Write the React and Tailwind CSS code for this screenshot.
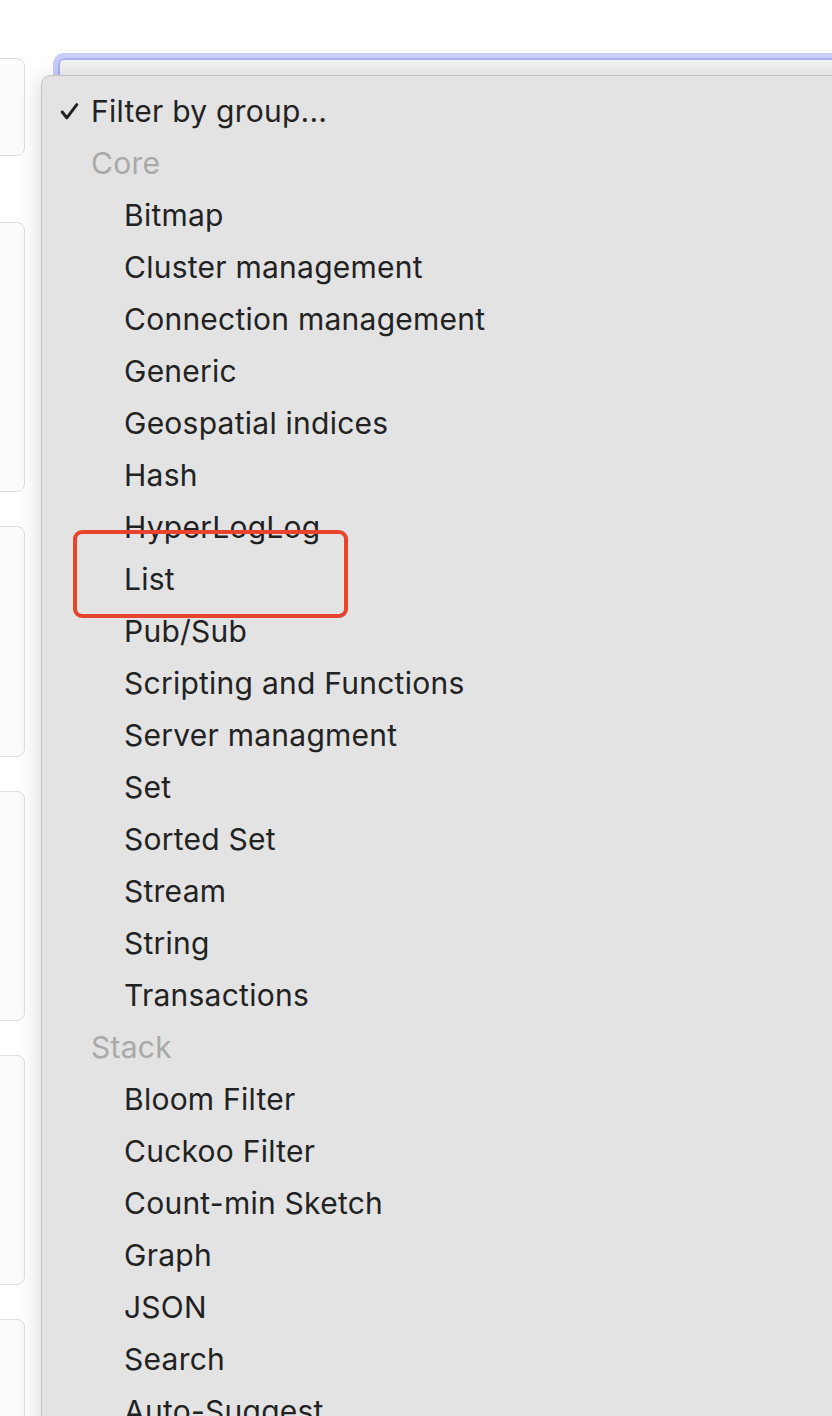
import React from "react";

const groups = [
  {
    name: "Core",
    items: [
      "Bitmap",
      "Cluster management",
      "Connection management",
      "Generic",
      "Geospatial indices",
      "Hash",
      "HyperLogLog",
      "List",
      "Pub/Sub",
      "Scripting and Functions",
      "Server managment",
      "Set",
      "Sorted Set",
      "Stream",
      "String",
      "Transactions",
    ],
  },
  {
    name: "Stack",
    items: ["Bloom Filter", "Cuckoo Filter", "Count-min Sketch", "Graph", "JSON", "Search", "Auto-Suggest"],
  },
];

function Check() {
  return (
    <svg width="19" height="19" viewBox="0 0 19 19" className="shrink-0">
      <path d="M2.2 10 L6.8 15.8 L16.8 2.6" fill="none" stroke="#222" strokeWidth="3" strokeLinecap="round" strokeLinejoin="round" />
    </svg>
  );
}

export default function App() {
  return (
    <div
      className="relative w-[832px] h-[1416px] overflow-hidden bg-white"
      style={{ fontFamily: "Inter, 'Noto Sans', sans-serif" }}
    >
      <div className="flex">
        {/* left column of cards */}
        <div className="w-[26px] shrink-0 overflow-hidden pt-[58px]">
          <div className="ml-[-40px] w-[65px] flex flex-col">
            <div className="h-[98px] rounded-[8px] border border-[#dedede] bg-[#fbfbfb]" />
            <div className="h-[270px] mt-[66px] rounded-[8px] border border-[#dedede] bg-[#fbfbfb]" />
            <div className="h-[231px] mt-[34px] rounded-[8px] border border-[#dedede] bg-[#fbfbfb]" />
            <div className="h-[230px] mt-[34px] rounded-[8px] border border-[#dedede] bg-[#fbfbfb]" />
            <div className="h-[230px] mt-[34px] rounded-[8px] border border-[#dedede] bg-[#fbfbfb]" />
            <div className="h-[230px] mt-[34px] rounded-[8px] border border-[#dedede] bg-[#fbfbfb]" />
          </div>
        </div>
        {/* select with focus ring */}
        <div className="flex-1 pl-[32px] pt-[58px]">
          <div className="h-[60px] w-[900px] rounded-[6px] border-2 border-[#a9b1f0] bg-gradient-to-b from-[#f1f1f4] to-[#e9e9ec] shadow-[0_0_0_5px_#c8cdf7]" />
        </div>
      </div>

      {/* native dropdown menu */}
      <div className="absolute left-[41px] top-[75px] w-[850px] h-[1400px] rounded-[10px] border border-[#c2c2c2] bg-[#e3e3e3] shadow-[-6px_0_18px_rgba(0,0,0,0.10)] pt-[9px] text-[30px] tracking-[0.25px]">
        <div className="flex h-[52px] items-center pl-[18px] text-[#222]">
          <Check />
          <span className="ml-[12px]">Filter by group...</span>
        </div>
        {groups.map((g) => (
          <div key={g.name}>
            <div className="flex h-[52px] items-center pl-[49px] text-[#a9a9a9]">{g.name}</div>
            {g.items.map((it) => (
              <div key={it} className="flex h-[52px] items-center pl-[82px] text-[#222]">
                {it}
              </div>
            ))}
          </div>
        ))}
      </div>

      {/* red annotation box */}
      <div className="absolute left-[73px] top-[530px] w-[275px] h-[88px] rounded-[9px] border-[4px] border-[#e8432c]" />
    </div>
  );
}
